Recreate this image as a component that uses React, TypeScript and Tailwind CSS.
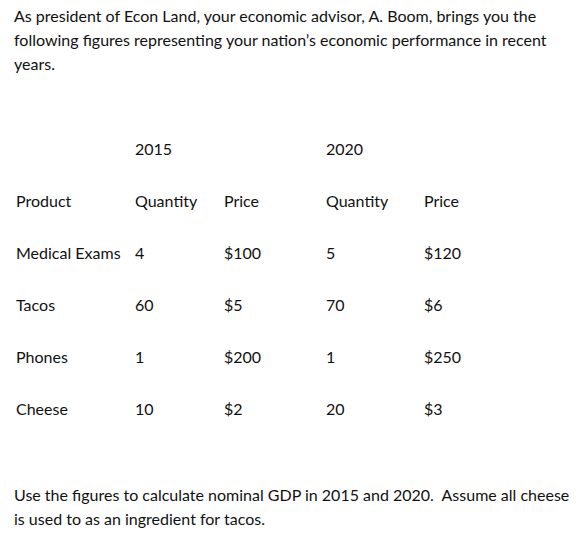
import React from "react";

const rows: [string, string, string, string, string][] = [
  ["", "2015", "", "2020", ""],
  ["Product", "Quantity", "Price", "Quantity", "Price"],
  ["Medical Exams", "4", "$100", "5", "$120"],
  ["Tacos", "60", "$5", "70", "$6"],
  ["Phones", "1", "$200", "1", "$250"],
  ["Cheese", "10", "$2", "20", "$3"],
];

export default function App() {
  return (
    <div
      className="w-[586px] h-[550px] bg-white text-[#111] text-[16px] leading-[24px] pl-[14px] pr-[8px] pt-[4px]"
      style={{ fontFamily: "Lato, 'Open Sans', sans-serif" }}
    >
      <p>
        As president of Econ Land, your economic advisor, A. Boom, brings you the following figures representing your nation’s economic performance in recent years.
      </p>
      <div className="mt-[47px] ml-[2px]">
        {rows.map((r, i) => (
          <div key={i} className="grid grid-cols-[119px_89px_102px_98px_1fr] h-[52px] items-center">
            {r.map((c, j) => (
              <div key={j}>{c}</div>
            ))}
          </div>
        ))}
      </div>
      <p className="mt-[48px]">
        Use the figures to calculate nominal GDP in 2015 and 2020.&nbsp; Assume all cheese is used to as an ingredient for tacos.
      </p>
    </div>
  );
}
